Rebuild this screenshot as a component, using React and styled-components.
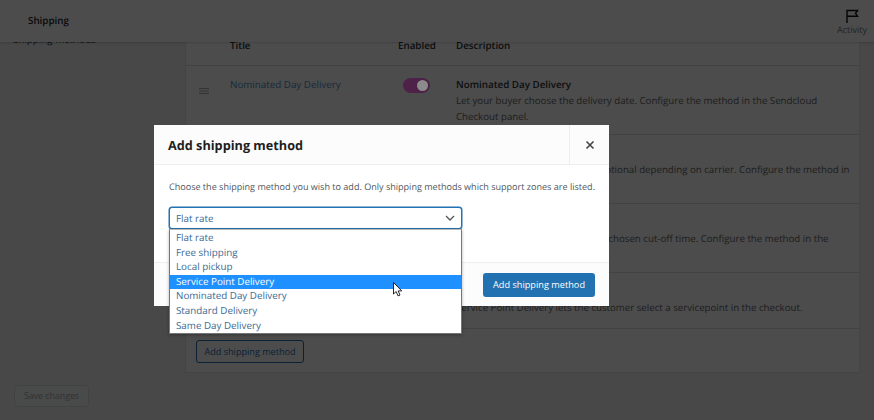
import React from "react";
import styled, { createGlobalStyle } from "styled-components";

const Global = createGlobalStyle`
  html, body {
    margin: 0;
    height: 420px;
    overflow: hidden;
    background: #f0f0f1;
    font-family: "Open Sans", "Noto Sans", sans-serif;
    font-size: 9.8px;
    color: #2c3338;
    text-rendering: geometricPrecision;
  }
  * { box-sizing: border-box; }
`;

const Page = styled.div`
  position: relative;
  width: 874px;
  height: 420px;
  overflow: hidden;
`;

const Header = styled.header`
  position: relative;
  z-index: 2;
  height: 42px;
  background: #fff;
  display: flex;
  align-items: center;
  justify-content: space-between;
  box-shadow: 0 1px 2px rgba(0, 0, 0, 0.15);
`;

const PageTitle = styled.h1`
  margin: 0 0 1px 28px;
  font-size: 9.8px;
  font-weight: 600;
  color: #1e1e1e;
`;

const Activity = styled.div`
  width: 44px;
  margin-top: 2px;
  display: flex;
  flex-direction: column;
  align-items: center;
  color: #111;
  font-size: 9px;
  line-height: 12px;
  span {
    margin-top: 1px;
    color: #777;
  }
`;

const Content = styled.div`
  display: flex;
  height: 331px;
`;

const Sidebar = styled.aside`
  width: 185px;
  flex: none;
  margin-top: -10px;
  padding: 0 10px 0 13px;
  display: flex;
  justify-content: space-between;
  height: 16px;
  line-height: 16px;
`;

const Panel = styled.section`
  width: 675px;
  height: 335px;
  margin-top: -4px;
  background: #fff;
  border: 1px solid #e3e3e3;
  border-top: 0;
`;

const Row = styled.div`
  display: grid;
  grid-template-columns: 44px 168px 58px 1fr;
  height: ${(p) => p.$h}px;
  padding-top: ${(p) => p.$top}px;
  border-bottom: 1px solid #dcdcde;
  line-height: 16px;
`;

const Heading = styled.div`
  font-weight: 600;
  font-size: 9.8px;
  color: #2c3338;
`;

const Handle = styled.div`
  padding: 6px 0 0 13px;
`;

const MethodLink = styled.a`
  color: #4f8fc4;
`;

const Toggle = styled.div`
  position: relative;
  z-index: 6;
  width: 27px;
  height: 15px;
  margin: 1px 0 0 5px;
  border-radius: 8px;
  background: #4d2148;
  padding: 2px;
  display: flex;
  justify-content: flex-end;
  &::after {
    content: "";
    width: 11px;
    height: 11px;
    border-radius: 50%;
    background: #8b8b8b;
  }
`;

const Desc = styled.div`
  white-space: nowrap;
  overflow: hidden;
  padding-right: 6px;
  color: #666;
  font-size: 9.7px;
`;

const Footer = styled.div`
  padding: 11px 10px;
`;

const OutlineButton = styled.button`
  width: 108px;
  height: 23px;
  padding: 0;
  font: inherit;
  font-size: 9.1px;
  color: #2271b1;
  background: #fff;
  border: 1px solid #2271b1;
  border-radius: 3px;
`;

const SaveBar = styled.div`
  padding: 12px 0 0 14px;
`;

const SaveButton = styled.button`
  width: 75px;
  height: 22px;
  padding: 0;
  font: inherit;
  font-size: 8.8px;
  color: #a7aaad;
  background: #f6f7f7;
  border: 1px solid #dcdcde;
  border-radius: 3px;
`;

const Backdrop = styled.div`
  position: absolute;
  z-index: 5;
  inset: 0;
  background: rgba(0, 0, 0, 0.7);
`;

const Modal = styled.div`
  position: absolute;
  z-index: 6;
  left: 154px;
  top: 125px;
  width: 455px;
  height: 181px;
  background: #fff;
  display: flex;
  flex-direction: column;
`;

const ModalHead = styled.div`
  height: 40px;
  flex: none;
  display: flex;
  justify-content: space-between;
  background: #fcfcfc;
  border-bottom: 1px solid #eee;
`;

const ModalTitle = styled.h2`
  margin: 0;
  padding-left: 14px;
  font-size: 12.7px;
  font-weight: 700;
  line-height: 40px;
  color: #1e1e1e;
`;

const CloseButton = styled.div`
  width: 40px;
  display: flex;
  align-items: center;
  justify-content: center;
  border-left: 1px solid #eee;
  color: #444;
`;

const ModalBody = styled.div`
  flex: 1;
  padding: 14px 15px 0;
`;

const Intro = styled.p`
  margin: 0 0 12px;
  font-size: 9.05px;
  line-height: 16px;
  color: #50575e;
  white-space: nowrap;
`;

const SelectWrap = styled.div`
  position: relative;
  width: 293px;
`;

const SelectBox = styled.div`
  height: 22px;
  padding: 0 6px;
  display: flex;
  align-items: center;
  justify-content: space-between;
  color: #3c6a94;
  border: 1px solid #2271b1;
  box-shadow: 0 0 0 0.5px #2271b1;
  border-radius: 3px;
  background: #fff;
`;

const Options = styled.ul`
  position: absolute;
  left: 0;
  top: 22px;
  width: 100%;
  margin: 0;
  padding: 1px 0 0;
  list-style: none;
  background: #fff;
  border: 1px solid #767676;
  border-top-color: #bbb;
  box-shadow: 0 1px 3px rgba(0, 0, 0, 0.3);
  z-index: 2;
`;

const Option = styled.li`
  height: 14.6px;
  line-height: 14.6px;
  padding-left: 6px;
  color: ${(p) => (p.$active ? "#fff" : "#3c6a94")};
  background: ${(p) => (p.$active ? "#1e90ff" : "transparent")};
`;

const ModalFoot = styled.div`
  height: 44px;
  flex: none;
  display: flex;
  align-items: center;
  justify-content: flex-end;
  padding: 0 14px 0 0;
  background: #fcfcfc;
  border-top: 1px solid #eee;
`;

const PrimaryButton = styled.button`
  height: 24px;
  width: 112px;
  padding: 0;
  font: inherit;
  font-size: 9.2px;
  color: #fff;
  background: #2271b1;
  border: 0;
  border-radius: 3px;
`;

const Cursor = styled.svg`
  position: absolute;
  z-index: 8;
  left: 393px;
  top: 282px;
`;

const rows = [
  {
    h: 69,
    title: "Nominated Day Delivery",
    lines: [
      "Let your buyer choose the delivery date. Configure the method in the Sendcloud",
      "Checkout panel.",
    ],
  },
  {
    h: 69,
    title: "Standard Delivery",
    lines: [
      "Deliver to buyers. Delivery date optional depending on carrier. Configure the method in",
      "the Sendcloud Checkout panel.",
    ],
  },
  {
    h: 69,
    title: "Same Day Delivery",
    lines: [
      "Same day delivery if order before chosen cut-off time. Configure the method in the",
      "Sendcloud Checkout panel.",
    ],
  },
  {
    h: 56,
    title: "Service Point Delivery",
    lines: ["Service Point Delivery lets the customer select a servicepoint in the checkout."],
  },
];

const options = [
  "Flat rate",
  "Free shipping",
  "Local pickup",
  "Service Point Delivery",
  "Nominated Day Delivery",
  "Standard Delivery",
  "Same Day Delivery",
];

export default function App() {
  return (
    <Page>
      <Global />
      <Header>
        <PageTitle>Shipping</PageTitle>
        <Activity>
          <svg width="14" height="14" viewBox="0 0 14 14" fill="none" stroke="currentColor" strokeWidth="1.4">
            <path d="M2 14V1.5h10.5l-2 2.8 2 2.9H2" />
          </svg>
          <span>Activity</span>
        </Activity>
      </Header>
      <Content>
        <Sidebar>
          <span>Shipping methods</span>
          <svg width="8" height="16" viewBox="0 0 8 16" fill="currentColor">
            <path d="M0 7h8l-4 3z" />
          </svg>
        </Sidebar>
        <Panel>
          <Row $h={28} $top={0}>
            <div />
            <Heading>Title</Heading>
            <Heading>Enabled</Heading>
            <Heading>Description</Heading>
          </Row>
          {rows.map((r) => (
            <Row key={r.title} $h={r.h} $top={11}>
              <Handle>
                <svg width="10" height="6" viewBox="0 0 10 6" stroke="#aaa" strokeWidth="1">
                  <path d="M0 .5h10M0 3h10M0 5.5h10" />
                </svg>
              </Handle>
              <MethodLink>{r.title}</MethodLink>
              <div>
                <Toggle />
              </div>
              <Desc>
                <Heading>{r.title}</Heading>
                {r.lines.map((line) => (
                  <div key={line}>{line}</div>
                ))}
              </Desc>
            </Row>
          ))}
          <Footer>
            <OutlineButton>Add shipping method</OutlineButton>
          </Footer>
        </Panel>
      </Content>
      <SaveBar>
        <SaveButton>Save changes</SaveButton>
      </SaveBar>
      <Backdrop />
      <Modal>
        <ModalHead>
          <ModalTitle>Add shipping method</ModalTitle>
          <CloseButton>
            <svg width="10" height="10" viewBox="0 0 10 10" stroke="currentColor" strokeWidth="1.6">
              <path d="M1.5 1.5l7 7M8.5 1.5l-7 7" />
            </svg>
          </CloseButton>
        </ModalHead>
        <ModalBody>
          <Intro>Choose the shipping method you wish to add. Only shipping methods which support zones are listed.</Intro>
          <SelectWrap>
            <SelectBox>
              <span>Flat rate</span>
              <svg width="10" height="6" viewBox="0 0 10 6" fill="none" stroke="#555" strokeWidth="1.3">
                <path d="M1 1l4 4 4-4" />
              </svg>
            </SelectBox>
            <Options>
              {options.map((o, i) => (
                <Option key={o} $active={i === 3}>
                  {o}
                </Option>
              ))}
            </Options>
          </SelectWrap>
        </ModalBody>
        <ModalFoot>
          <PrimaryButton>Add shipping method</PrimaryButton>
        </ModalFoot>
      </Modal>
      <Cursor width="10" height="15" viewBox="0 0 10 15">
        <path d="M.5.5v11.5l2.7-2.4 1.8 4.3 2-.8-1.8-4.2h3.6z" fill="#fff" stroke="#111" strokeWidth="0.9" />
      </Cursor>
    </Page>
  );
}
